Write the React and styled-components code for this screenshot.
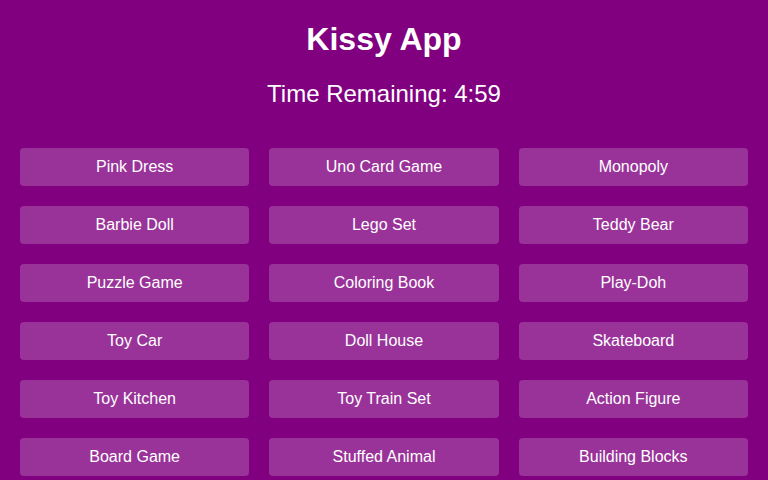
import React, { useState } from 'react';
import styled, { createGlobalStyle } from 'styled-components';

const GlobalStyle = createGlobalStyle`
  body {
    margin: 0;
    background-color: #800080;
    font-family: "Liberation Sans", Arial, sans-serif;
    color: #fff;
  }
`;

const Page = styled.div`
  display: flex;
  flex-direction: column;
  align-items: center;
  padding-top: 21px;
`;

const Title = styled.h1`
  margin: 0;
  font-size: 32px;
  font-weight: bold;
  line-height: 37px;
`;

const Timer = styled.p`
  margin: 22px 0 0;
  font-size: 24px;
  line-height: 28px;
`;

const Grid = styled.div`
  align-self: stretch;
  display: grid;
  grid-template-columns: repeat(3, 1fr);
  gap: 20px;
  padding: 0 20px;
  margin-top: 40px;
`;

const ItemButton = styled.button`
  height: 38px;
  border: none;
  border-radius: 4px;
  background-color: rgba(255, 255, 255, 0.2);
  color: #fff;
  font-family: inherit;
  font-size: 16px;
  cursor: pointer;
`;

const items = [
  'Pink Dress', 'Uno Card Game', 'Monopoly',
  'Barbie Doll', 'Lego Set', 'Teddy Bear',
  'Puzzle Game', 'Coloring Book', 'Play-Doh',
  'Toy Car', 'Doll House', 'Skateboard',
  'Toy Kitchen', 'Toy Train Set', 'Action Figure',
  'Board Game', 'Stuffed Animal', 'Building Blocks',
];

function formatTime(seconds) {
  const m = Math.floor(seconds / 60);
  const s = seconds % 60;
  return `${m}:${s < 10 ? '0' : ''}${s}`;
}

export default function App() {
  const [timeLeft] = useState(299);

  return (
    <>
      <GlobalStyle />
      <Page>
        <Title>Kissy App</Title>
        <Timer>Time Remaining: {formatTime(timeLeft)}</Timer>
        <Grid>
          {items.map((item) => (
            <ItemButton key={item}>{item}</ItemButton>
          ))}
        </Grid>
      </Page>
    </>
  );
}
